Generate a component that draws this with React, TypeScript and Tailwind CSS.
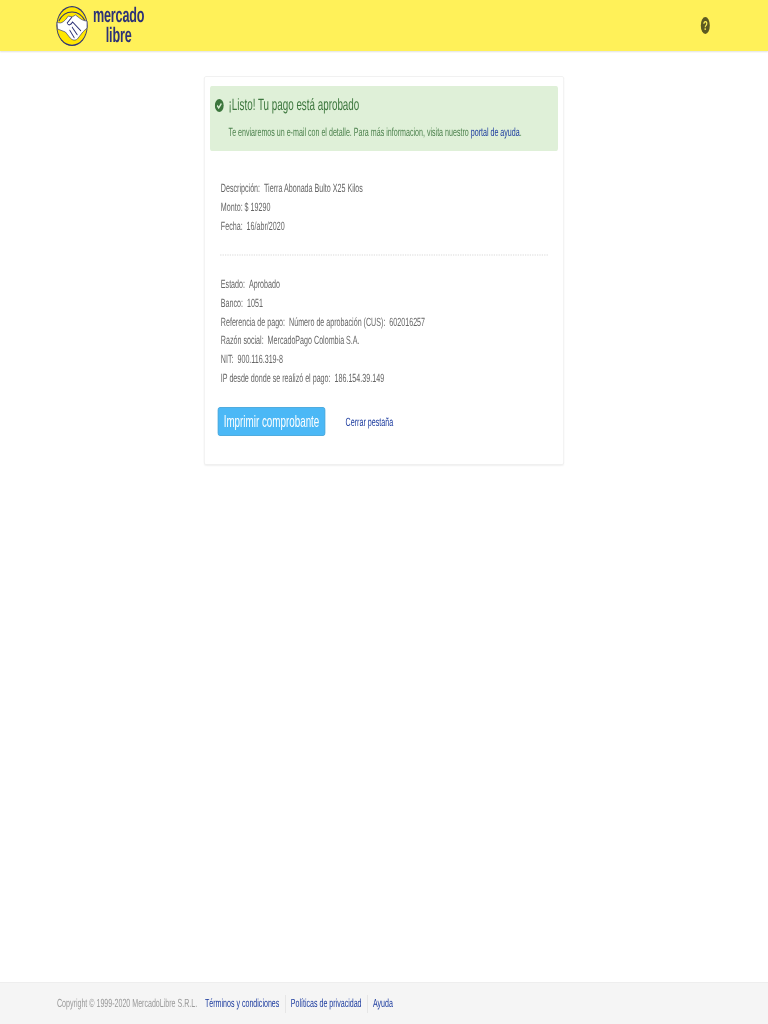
function Logo() {
  return (
    <div className="flex items-center gap-[8px]">
      <svg width="54" height="42" viewBox="0 0 54 42" className="shrink-0">
        <ellipse cx="27" cy="21" rx="26" ry="20" fill="#2d3277" />
        <ellipse cx="27" cy="21" rx="24.6" ry="18.8" fill="#ffe600" />
        <path d="M5 16 C11 9 19 7 27 7 C35 7 43 9 49 16" fill="none" stroke="#2d3277" strokeWidth="1.2" />
        <path d="M2 17 C10 20 16 15 21 11 L27 12 L33 10 C39 13 45 16 52 16 L52 23 L45 27 L36 34 C32 36 27 35 24 33 L16 27 L3 24 Z" fill="#fff" stroke="#2d3277" strokeWidth="0.8" />
        <path d="M27 12 L19 18 C21 21 25 20 28 17 L42 26 M27 22 L36 30 M23 25 L31 33" fill="none" stroke="#2d3277" strokeWidth="1.2" />
      </svg>
      <div className="flex flex-col items-center font-['Liberation_Sans',sans-serif] font-bold text-[#2d3277] text-[21px] leading-[20px] tracking-[-0.3px]">
        <span>mercado</span>
        <span>libre</span>
      </div>
    </div>
  );
}

const firstRows = [
  'Descripción:\u00a0\u00a0Tierra Abonada Bulto X25 Kilos',
  'Monto:\u00a0$\u00a019290',
  'Fecha:\u00a0\u00a016/abr/2020',
];

const secondRows = [
  'Estado:\u00a0\u00a0Aprobado',
  'Banco:\u00a0\u00a01051',
  'Referencia de pago:\u00a0\u00a0Número de aprobación (CUS):\u00a0\u00a0602016257',
  'Razón social:\u00a0\u00a0MercadoPago Colombia S.A.',
  'NIT:\u00a0\u00a0900.116.319-8',
  'IP desde donde se realizó el pago:\u00a0\u00a0186.154.39.149',
];

export default function App() {
  return (
    <div className="w-screen overflow-hidden bg-white">
      <div className="w-[1280px] min-h-screen origin-left scale-x-[0.6] flex flex-col blur-[0.5px] [text-rendering:geometricPrecision] font-['Liberation_Sans',Arial,sans-serif] text-[11.9px] text-[#666]">
        <header className="h-[51px] bg-[#fff159] shadow-[0_1px_2px_rgba(0,0,0,0.12)] flex items-center justify-between pl-[93px] pr-[97px]">
          <Logo />
          <span className="w-[15px] h-[17px] rounded-[50%] bg-[#5c5a22] text-[#fff159] flex items-center justify-center text-[13px] font-bold">?</span>
        </header>

        <main className="flex-1">
          <div className="w-[600px] h-[389px] mx-auto mt-[25px] bg-white border border-[#eeeeee] rounded-[3px] shadow-[0_1px_2px_rgba(0,0,0,0.06)] p-[9px]">
            <div className="h-[65px] bg-[#dff0d8] rounded-[3px] text-[#3c763d] pl-[15px] pr-[10px] pt-[11px]">
              <div className="flex items-center h-[16px] text-[16.4px]">
                <svg width="15" height="13" viewBox="0 0 15 13" className="shrink-0 -ml-[7px] mr-[8px]">
                  <ellipse cx="7.5" cy="6.5" rx="7.5" ry="6.5" fill="#3c763d" />
                  <path d="M4 6.5 L6.5 9 L11 4.5" fill="none" stroke="#dff0d8" strokeWidth="1.8" />
                </svg>
                <span>¡Listo! Tu pago está aprobado</span>
              </div>
              <p className="mt-[11px] pl-[16px] h-[16px] leading-[16px] text-[11.85px] text-[#4d824e]">
                Te enviaremos un e-mail con el detalle. Para más informacion, visita nuestro{' '}
                <a className="text-[#1a3a9e]">portal de ayuda</a>.
              </p>
            </div>

            <div className="px-[18px] pt-[28px]">
              <div className="leading-[19px]">
                {firstRows.map((row) => (
                  <div key={row}>{row}</div>
                ))}
              </div>
              <div className="mt-[18px] -mx-[1px] border-t-2 border-dotted border-[#ececec]" />
              <div className="mt-[19px] leading-[18.8px]">
                {secondRows.map((row) => (
                  <div key={row}>{row}</div>
                ))}
              </div>
              <div className="flex items-center mt-[19px] -ml-[5px]">
                <button className="w-[179px] h-[29px] rounded-[3px] bg-[#4bb8f6] border border-[#3a9fd8] text-white text-[16.4px]">
                  Imprimir comprobante
                </button>
                <a className="ml-[34px] mt-[3px] text-[#1a3a9e]">Cerrar pestaña</a>
              </div>
            </div>
          </div>
        </main>

        <footer className="h-[42px] bg-[#f5f5f5] border-t border-[#eeeeee] flex items-center pl-[95px] pt-[1px] text-[11.8px]">
          <span className="text-[#999]">Copyright © 1999-2020 MercadoLibre S.R.L.</span>
          <nav className="flex items-center ml-[13px] text-[#1a3a9e]">
            <a className="pr-[9px]">Términos y condiciones</a>
            <a className="px-[9px] border-l border-[#dddddd]">Políticas de privacidad</a>
            <a className="pl-[9px] border-l border-[#dddddd]">Ayuda</a>
          </nav>
        </footer>
      </div>
    </div>
  );
}
